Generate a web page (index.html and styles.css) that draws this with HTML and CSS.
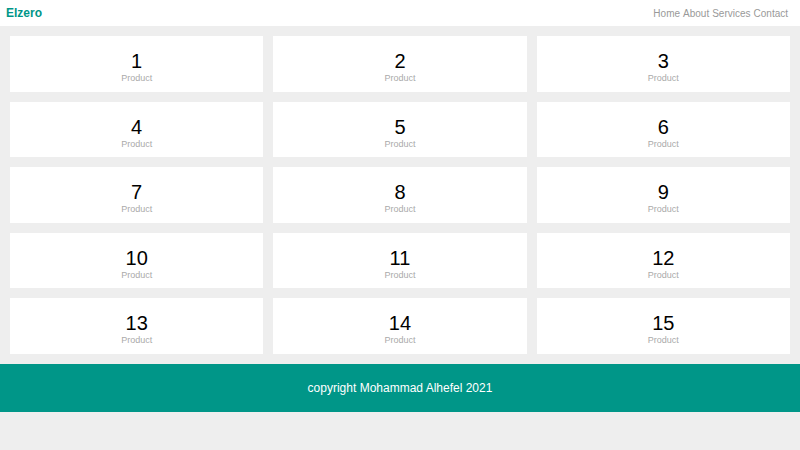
FILE: index.html
```html
<!DOCTYPE html>
<html>
<head>
<meta charset="utf-8">
<link rel="stylesheet" href="styles.css">
</head>
<body>
<header class="header">
  <a class="logo" href="#">Elzero</a>
  <nav class="nav">
    <a href="#">Home</a>
    <a href="#">About</a>
    <a href="#">Services</a>
    <a href="#">Contact</a>
  </nav>
</header>
<main class="grid">
  <div class="card"><div class="num">1</div><div class="label">Product</div></div>
  <div class="card"><div class="num">2</div><div class="label">Product</div></div>
  <div class="card"><div class="num">3</div><div class="label">Product</div></div>
  <div class="card"><div class="num">4</div><div class="label">Product</div></div>
  <div class="card"><div class="num">5</div><div class="label">Product</div></div>
  <div class="card"><div class="num">6</div><div class="label">Product</div></div>
  <div class="card"><div class="num">7</div><div class="label">Product</div></div>
  <div class="card"><div class="num">8</div><div class="label">Product</div></div>
  <div class="card"><div class="num">9</div><div class="label">Product</div></div>
  <div class="card"><div class="num">10</div><div class="label">Product</div></div>
  <div class="card"><div class="num">11</div><div class="label">Product</div></div>
  <div class="card"><div class="num">12</div><div class="label">Product</div></div>
  <div class="card"><div class="num">13</div><div class="label">Product</div></div>
  <div class="card"><div class="num">14</div><div class="label">Product</div></div>
  <div class="card"><div class="num">15</div><div class="label">Product</div></div>
</main>
<footer class="footer">copyright Mohammad Alhefel 2021</footer>
</body>
</html>
```
FILE: styles.css
```css
* { box-sizing: border-box; }
body {
  margin: 0;
  background: #eeeeee;
  font-family: "Liberation Sans", Arial, sans-serif;
}
.header {
  height: 26px;
  background: #fff;
  display: flex;
  align-items: center;
  justify-content: space-between;
  padding: 0 12px 0 6px;
}
.logo {
  color: #009688;
  font-weight: bold;
  font-size: 12px;
  text-decoration: none;
}
.nav {
  display: flex;
  gap: 3px;
}
.nav a {
  color: #999;
  font-size: 10px;
  text-decoration: none;
}
.grid {
  display: grid;
  grid-template-columns: repeat(3, 1fr);
  gap: 10px;
  padding: 10px;
}
.card {
  background: #fff;
  padding: 13px 10px 7px;
  text-align: center;
}
.num {
  font-size: 20px;
  line-height: 24px;
  color: #000;
}
.label {
  font-size: 9px;
  line-height: 11.6px;
  color: #aaa;
}
.footer {
  background: #009688;
  color: #fff;
  height: 48px;
  display: flex;
  align-items: center;
  justify-content: center;
  font-size: 12px;
}
```
